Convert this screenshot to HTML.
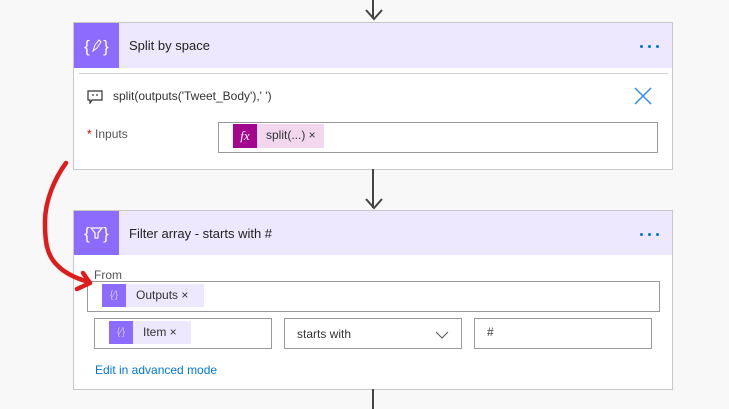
<!DOCTYPE html>
<html><head><meta charset="utf-8"><style>
body{margin:0;width:729px;height:409px;background:#f8f8f8;position:relative;overflow:hidden;font-family:"Segoe UI","Liberation Sans",sans-serif;color:#333}
.a{position:absolute}
.card{position:absolute;left:73px;width:598px;background:#fff;border:1px solid #c8c8c8}
.hdr{position:absolute;left:0;top:0;right:0;height:45px;background:#ede8fe}
.ico{position:absolute;left:0;top:0;width:45px;height:45px;background:#8c6cff}
.title{position:absolute;left:55px;top:15px;font-size:13px;color:#222}
.dot{position:absolute;top:22px;width:3px;height:3px;border-radius:50%;background:#0078d4}
.box{position:absolute;border:1px solid #999;background:#fff}
.tok{position:absolute;height:23px;font-size:12px;line-height:23px}
.ti{position:absolute;left:0;top:0;width:24px;height:23px}
</style></head><body>
<div class="a" style="left:372px;top:0;width:2px;height:18px;background:#444"></div>
<svg class="a" style="left:364px;top:8px" width="20" height="14"><path d="M2 2 L10 11 L18 2" fill="none" stroke="#444" stroke-width="2"/></svg>

<div class="card" style="top:22px;height:146px">
 <div class="hdr" style="height:45px"><div class="ico"><svg width="45" height="45"><text x="13" y="29" font-size="17" fill="#fff" text-anchor="middle" font-family="Liberation Sans">{</text><text x="32" y="29" font-size="17" fill="#fff" text-anchor="middle" font-family="Liberation Sans">}</text><path d="M19 28 L21 22 L25 17 L27 19 L23 25 Z" fill="none" stroke="#fff" stroke-width="1"/></svg></div>
 <div class="title">Split by space</div><div class="dot" style="left:566px"></div><div class="dot" style="left:574px"></div><div class="dot" style="left:582px"></div></div>
 <div class="a" style="left:5px;top:50px;width:589px;height:1px;background:#d0d0d0"></div>
 <svg class="a" style="left:13px;top:67px" width="16" height="14"><path d="M1 1 H15 V10 H5 L3 13 V10 H1 Z" fill="none" stroke="#333" stroke-width="1.2"/><circle cx="6" cy="5" r="0.9" fill="#333"/><circle cx="10" cy="5" r="0.9" fill="#333"/></svg>
 <div class="a" style="left:39px;top:66px;font-size:12px">split(outputs('Tweet_Body'),' ')</div>
 <svg class="a" style="left:560px;top:64px" width="18" height="18"><path d="M1 1 L17 17 M17 1 L1 17" stroke="#2b88f0" stroke-width="1.4"/></svg>
 <div class="a" style="left:13px;top:104px;font-size:12px;color:#555"><span style="color:#d00">*</span> Inputs</div>
 <div class="box" style="left:144px;top:99px;width:438px;height:29px"></div>
 <div class="tok" style="left:159px;top:101px;width:91px;background:#f2d7ef;height:24px"><div class="ti" style="background:#a4058f;height:24px;color:#fff;font-family:'Liberation Serif',serif;font-style:italic;text-align:center;font-size:13px">fx</div><span style="position:absolute;left:33px">split(...) ×</span></div>
</div>

<div class="a" style="left:372px;top:169px;width:2px;height:39px;background:#444"></div>
<svg class="a" style="left:364px;top:197px" width="20" height="14"><path d="M2 2 L10 11 L18 2" fill="none" stroke="#444" stroke-width="2"/></svg>

<div class="card" style="top:210px;height:178px">
 <div class="hdr" style="height:44px"><div class="ico" style="height:44px"><svg width="45" height="44"><text x="13" y="28" font-size="17" fill="#fff" text-anchor="middle" font-family="Liberation Sans">{</text><text x="32" y="28" font-size="17" fill="#fff" text-anchor="middle" font-family="Liberation Sans">}</text><path d="M17 17 H28 L24 22 V27 H21 V22 Z" fill="none" stroke="#fff" stroke-width="1.2"/></svg></div>
 <div class="title">Filter array - starts with #</div><div class="dot" style="left:566px"></div><div class="dot" style="left:574px"></div><div class="dot" style="left:582px"></div></div>
 <div class="a" style="left:20px;top:57px;font-size:12px;color:#555">From</div>
 <div class="box" style="left:13px;top:70px;width:571px;height:29px"></div>
 <div class="tok" style="left:28px;top:73px;width:102px;background:#ede8fe"><div class="ti" style="background:#8c6cff;color:#cfc2ff;font-size:10px;text-align:center">{⁄}</div><span style="position:absolute;left:34px">Outputs ×</span></div>
 <div class="box" style="left:20px;top:107px;width:176px;height:29px"></div>
 <div class="tok" style="left:35px;top:110px;width:82px;background:#ede8fe"><div class="ti" style="background:#8c6cff;color:#cfc2ff;font-size:10px;text-align:center">{⁄}</div><span style="position:absolute;left:34px">Item ×</span></div>
 <div class="box" style="left:210px;top:107px;width:176px;height:29px"><span style="position:absolute;left:12px;top:8px;font-size:12px">starts with</span><svg class="a" style="left:150px;top:12px" width="14" height="8"><path d="M1 1 L7 7 L13 1" fill="none" stroke="#555"/></svg></div>
 <div class="box" style="left:400px;top:107px;width:176px;height:29px"><span style="position:absolute;left:12px;top:6px;font-size:12px">#</span></div>
 <div class="a" style="left:21px;top:152px;font-size:12px;color:#0078d4">Edit in advanced mode</div>
</div>
<div class="a" style="left:372px;top:389px;width:2px;height:20px;background:#444"></div>

<svg class="a" style="left:0;top:0" width="729" height="409"><path d="M66 163 C55 178 45 200 45 222 C45 240 46 255 58 266 C66 274 78 279 89 282" fill="none" stroke="#e01b1b" stroke-width="4.5" stroke-linecap="round"/><path d="M83 273 L90 283 L77 289" fill="none" stroke="#e01b1b" stroke-width="4.5" stroke-linecap="round" stroke-linejoin="round"/></svg>
</body></html>
